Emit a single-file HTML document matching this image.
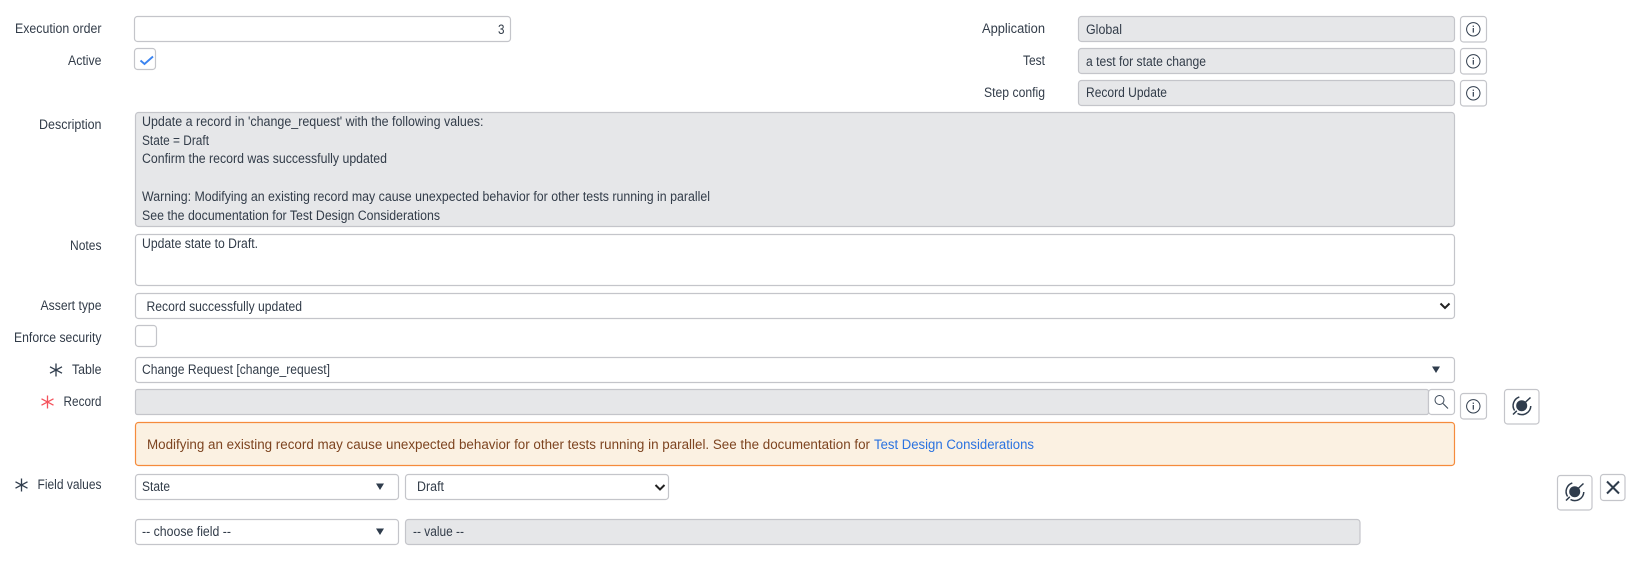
<!DOCTYPE html>
<html><head><meta charset="utf-8"><style>
html,body{margin:0;padding:0;background:#fff;width:1638px;height:569px;overflow:hidden}
svg{display:block}
text{font-family:"Liberation Sans",sans-serif;font-size:13.5px;fill:#323c49}
.b{fill:#fff;stroke:#c4c5ca;stroke-width:1.2}
.r{fill:#e6e7e9;stroke:#c4c5ca;stroke-width:1.2}
</style></head><body>
<svg width="1638" height="569" viewBox="0 0 1638 569" xmlns="http://www.w3.org/2000/svg">
<defs>
<g id="info"><rect class="b" x="0.5" y="0.5" width="26" height="25.5" rx="3"/><circle cx="13.3" cy="13.3" r="6.7" fill="none" stroke="#2f3c4c" stroke-width="1"/><rect x="12.7" y="12" width="1.2" height="4.6" fill="#2f3c4c"/><rect x="12.7" y="9.6" width="1.2" height="1.3" fill="#2f3c4c"/></g>
<g id="tg"><rect class="b" x="0.5" y="0.5" width="34.5" height="34.5" rx="3"/>
<circle cx="17.7" cy="16.7" r="5.500" fill="#2f3c4c"/>
<path d="M15.300 8 A9 9 0 0 0 10.600 21.500" fill="none" stroke="#2f3c4c" stroke-width="1.500"/>
<path d="M13.500 24.500 A9 9 0 0 0 26.800 17" fill="none" stroke="#2f3c4c" stroke-width="1.500"/>
<path d="M19.500 15 L26.500 8.500 M9 25.500 L12.800 21.800" stroke="#2f3c4c" stroke-width="1.500"/></g>
<path id="ast" d="M-6 -3.200 L6 3.200 M-6 3.200 L6 -3.200 M0 -6.500 L0 6.500" fill="none" stroke-width="1.300"/>
</defs>

<!-- left labels -->
<text x="15" y="33" textLength="86.500" lengthAdjust="spacingAndGlyphs">Execution order</text>
<text x="68" y="65" textLength="33.500" lengthAdjust="spacingAndGlyphs">Active</text>
<text x="39" y="129" textLength="62.500" lengthAdjust="spacingAndGlyphs">Description</text>
<text x="70" y="250" textLength="31.500" lengthAdjust="spacingAndGlyphs">Notes</text>
<text x="40.500" y="310" textLength="61" lengthAdjust="spacingAndGlyphs">Assert type</text>
<text x="14" y="342" textLength="87.500" lengthAdjust="spacingAndGlyphs">Enforce security</text>
<text x="72" y="374" textLength="29.500" lengthAdjust="spacingAndGlyphs">Table</text>
<text x="63.500" y="406" textLength="38" lengthAdjust="spacingAndGlyphs">Record</text>
<text x="37.500" y="489" textLength="64" lengthAdjust="spacingAndGlyphs">Field values</text>
<use href="#ast" x="56" y="370" stroke="#2f3c4c"/>
<use href="#ast" x="47.500" y="402" stroke="#f4525c"/>
<use href="#ast" x="21.500" y="485" stroke="#2f3c4c"/>

<!-- top left -->
<rect class="b" x="134.500" y="16.500" width="376" height="25" rx="3"/>
<text x="498" y="34" textLength="6.500" lengthAdjust="spacingAndGlyphs">3</text>
<rect class="b" x="134.500" y="48.500" width="21" height="21" rx="3"/>
<path d="M140.500 60.500 L144.500 64 L153 56.500" fill="none" stroke="#3b84f0" stroke-width="1.900"/>

<!-- right labels -->
<text x="982" y="33" textLength="63" lengthAdjust="spacingAndGlyphs">Application</text>
<text x="1023" y="65" textLength="22" lengthAdjust="spacingAndGlyphs">Test</text>
<text x="984" y="97" textLength="61" lengthAdjust="spacingAndGlyphs">Step config</text>
<rect class="r" x="1078.500" y="16.500" width="376" height="25" rx="3"/>
<rect class="r" x="1078.500" y="48.500" width="376" height="25" rx="3"/>
<rect class="r" x="1078.500" y="80.500" width="376" height="25" rx="3"/>
<text x="1086" y="34" textLength="36" lengthAdjust="spacingAndGlyphs">Global</text>
<text x="1086" y="66" textLength="120" lengthAdjust="spacingAndGlyphs">a test for state change</text>
<text x="1086" y="97" textLength="81" lengthAdjust="spacingAndGlyphs">Record Update</text>
<use href="#info" x="1460" y="16"/>
<use href="#info" x="1460" y="48"/>
<use href="#info" x="1460" y="80"/>

<!-- description -->
<rect class="r" x="135.500" y="112.500" width="1319" height="114" rx="3"/>
<text x="142" y="126" textLength="341.500" lengthAdjust="spacingAndGlyphs">Update a record in 'change_request' with the following values:</text>
<text x="142" y="145" textLength="67" lengthAdjust="spacingAndGlyphs">State = Draft</text>
<text x="142" y="163" textLength="245" lengthAdjust="spacingAndGlyphs">Confirm the record was successfully updated</text>
<text x="142" y="201" textLength="568" lengthAdjust="spacingAndGlyphs">Warning: Modifying an existing record may cause unexpected behavior for other tests running in parallel</text>
<text x="142" y="220" textLength="298" lengthAdjust="spacingAndGlyphs">See the documentation for Test Design Considerations</text>

<!-- notes -->
<rect class="b" x="135.500" y="234.500" width="1319" height="51" rx="3"/>
<text x="142" y="248" textLength="116" lengthAdjust="spacingAndGlyphs">Update state to Draft.</text>

<!-- assert -->
<rect class="b" x="135.500" y="293.500" width="1319" height="25" rx="3"/>
<text x="146.500" y="311" textLength="155.500" lengthAdjust="spacingAndGlyphs">Record successfully updated</text>
<path d="M1440.500 303.500 L1445 308 L1449.500 303.500" fill="none" stroke="#222" stroke-width="2"/>

<rect class="b" x="135.500" y="325.500" width="21" height="21" rx="3"/>

<!-- table -->
<rect class="b" x="135.500" y="357.500" width="1319" height="25" rx="3"/>
<text x="142" y="374" textLength="188" lengthAdjust="spacingAndGlyphs">Change Request [change_request]</text>
<path d="M1432 366.500 H1440 L1436 373 Z" fill="#2f3c4c"/>

<!-- record -->
<rect class="r" x="135.500" y="389.500" width="1293" height="25" rx="2"/>
<rect class="b" x="1428.500" y="389.500" width="26" height="25" rx="3"/>
<circle cx="1439.500" cy="400" r="4.500" fill="none" stroke="#3d4a5a" stroke-width="1"/>
<path d="M1443 403.500 L1448 408.500" stroke="#3d4a5a" stroke-width="1.100"/>
<use href="#info" x="1460" y="393"/>
<use href="#tg" x="1504" y="389"/>

<!-- warning -->
<rect x="135.500" y="422.500" width="1319" height="43" rx="3" fill="#fbf1e2" stroke="#f58b3c" stroke-width="1.200"/>
<text x="147" y="449" textLength="723" lengthAdjust="spacingAndGlyphs" style="fill:#7d4420">Modifying an existing record may cause unexpected behavior for other tests running in parallel. See the documentation for</text>
<text x="874" y="449" textLength="160" lengthAdjust="spacingAndGlyphs" style="fill:#2a72e0">Test Design Considerations</text>

<!-- field values -->
<rect class="b" x="135.500" y="474.500" width="263" height="25" rx="3"/>
<text x="142" y="491" textLength="28" lengthAdjust="spacingAndGlyphs">State</text>
<path d="M376 483.500 H384 L380 490 Z" fill="#2f3c4c"/>
<rect class="b" x="405.500" y="474.500" width="263" height="25" rx="3"/>
<text x="417" y="491" textLength="27" lengthAdjust="spacingAndGlyphs">Draft</text>
<path d="M655.500 485 L660 489.500 L664.500 485" fill="none" stroke="#222" stroke-width="2"/>
<use href="#tg" x="1557" y="475"/>
<rect class="b" x="1600.500" y="474.500" width="24.500" height="26" rx="3"/>
<path d="M1607 481.500 L1619 493.500 M1619 481.500 L1607 493.500" stroke="#2f3c4c" stroke-width="2"/>

<!-- choose -->
<rect class="b" x="135.500" y="519.500" width="263" height="25" rx="3"/>
<text x="142" y="536" textLength="89" lengthAdjust="spacingAndGlyphs">-- choose field --</text>
<path d="M376 528.500 H384 L380 535 Z" fill="#2f3c4c"/>
<rect class="r" x="405.500" y="519.500" width="954.500" height="25" rx="3"/>
<text x="413" y="536" textLength="51" lengthAdjust="spacingAndGlyphs">-- value --</text>
</svg>
</body></html>
